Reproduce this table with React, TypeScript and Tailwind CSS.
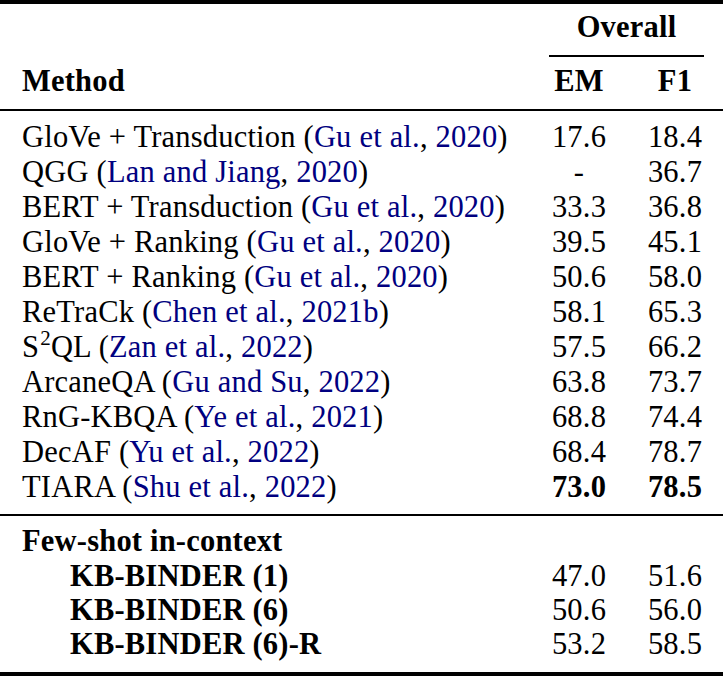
import React from 'react';

interface Row {
  name: React.ReactNode;
  cite: string;
  year: string;
  em: string;
  f1: string;
  bold?: boolean;
}

const rows: Row[] = [
  { name: 'GloVe + Transduction', cite: 'Gu et al.', year: '2020', em: '17.6', f1: '18.4' },
  { name: 'QGG', cite: 'Lan and Jiang', year: '2020', em: '-', f1: '36.7' },
  { name: 'BERT + Transduction', cite: 'Gu et al.', year: '2020', em: '33.3', f1: '36.8' },
  { name: 'GloVe + Ranking', cite: 'Gu et al.', year: '2020', em: '39.5', f1: '45.1' },
  { name: 'BERT + Ranking', cite: 'Gu et al.', year: '2020', em: '50.6', f1: '58.0' },
  { name: 'ReTraCk', cite: 'Chen et al.', year: '2021b', em: '58.1', f1: '65.3' },
  {
    name: (
      <>
        S<span className="align-[12px] text-[21px] leading-[0] pl-[1px]">2</span>QL
      </>
    ),
    cite: 'Zan et al.',
    year: '2022',
    em: '57.5',
    f1: '66.2',
  },
  { name: 'ArcaneQA', cite: 'Gu and Su', year: '2022', em: '63.8', f1: '73.7' },
  { name: 'RnG-KBQA', cite: 'Ye et al.', year: '2021', em: '68.8', f1: '74.4' },
  { name: 'DecAF', cite: 'Yu et al.', year: '2022', em: '68.4', f1: '78.7' },
  { name: 'TIARA', cite: 'Shu et al.', year: '2022', em: '73.0', f1: '78.5', bold: true },
];

const fewShot = [
  { name: 'KB-BINDER (1)', em: '47.0', f1: '51.6' },
  { name: 'KB-BINDER (6)', em: '50.6', f1: '56.0' },
  { name: 'KB-BINDER (6)-R', em: '53.2', f1: '58.5' },
];

const cols = 'grid grid-cols-[531px_96px_96px]';

export default function App() {
  return (
    <div
      className="w-[725px] h-[679px] bg-white text-black text-[30.5px] tracking-[0.2px] whitespace-nowrap"
      style={{ fontFamily: '"Liberation Serif", "Times New Roman", serif' }}
    >
      <div className="w-[723px]">
        <div className="h-[3.5px] bg-black" />

        {/* header */}
        <div className={`${cols} pt-[6.7px] pb-[10px] leading-[35px] font-bold`}>
          <div />
          <div className="col-span-2 text-center pl-[18px] pr-[19px]">Overall</div>
        </div>
        <div className={cols}>
          <div />
          <div className="col-span-2 pl-[18px] pr-[19px]">
            <div className="h-[1.5px] bg-black" />
          </div>
        </div>
        <div className={`${cols} pt-[7.5px] pb-[10px] leading-[35px] font-bold`}>
          <div className="pl-[22px]">Method</div>
          <div className="text-center">EM</div>
          <div className="text-center">F1</div>
        </div>
        <div className="h-[1.7px] bg-black" />

        {/* supervised rows */}
        <div className="pt-[9.3px] pb-[8.8px] leading-[35px]">
          {rows.map((r, i) => (
            <div key={i} className={`${cols} h-[35px]`}>
              <div className="pl-[22px]">
                {r.name} (<span className="text-[#000080]">{r.cite}</span>,{' '}
                <span className="text-[#000080]">{r.year}</span>)
              </div>
              <div className={`text-center ${r.bold ? 'font-bold' : ''}`}>{r.em}</div>
              <div className={`text-center ${r.bold ? 'font-bold' : ''}`}>{r.f1}</div>
            </div>
          ))}
        </div>
        <div className="h-[1.7px] bg-black" />

        {/* few-shot */}
        <div className="pt-[8.5px] pb-[10.5px] leading-[34.4px]">
          <div className={cols}>
            <div className="pl-[22px] font-bold">Few-shot in-context</div>
            <div />
            <div />
          </div>
          {fewShot.map(r => (
            <div key={r.name} className={cols}>
              <div className="pl-[70px] font-bold">{r.name}</div>
              <div className="text-center">{r.em}</div>
              <div className="text-center">{r.f1}</div>
            </div>
          ))}
        </div>
        <div className="h-[3.5px] bg-black" />
      </div>
    </div>
  );
}
